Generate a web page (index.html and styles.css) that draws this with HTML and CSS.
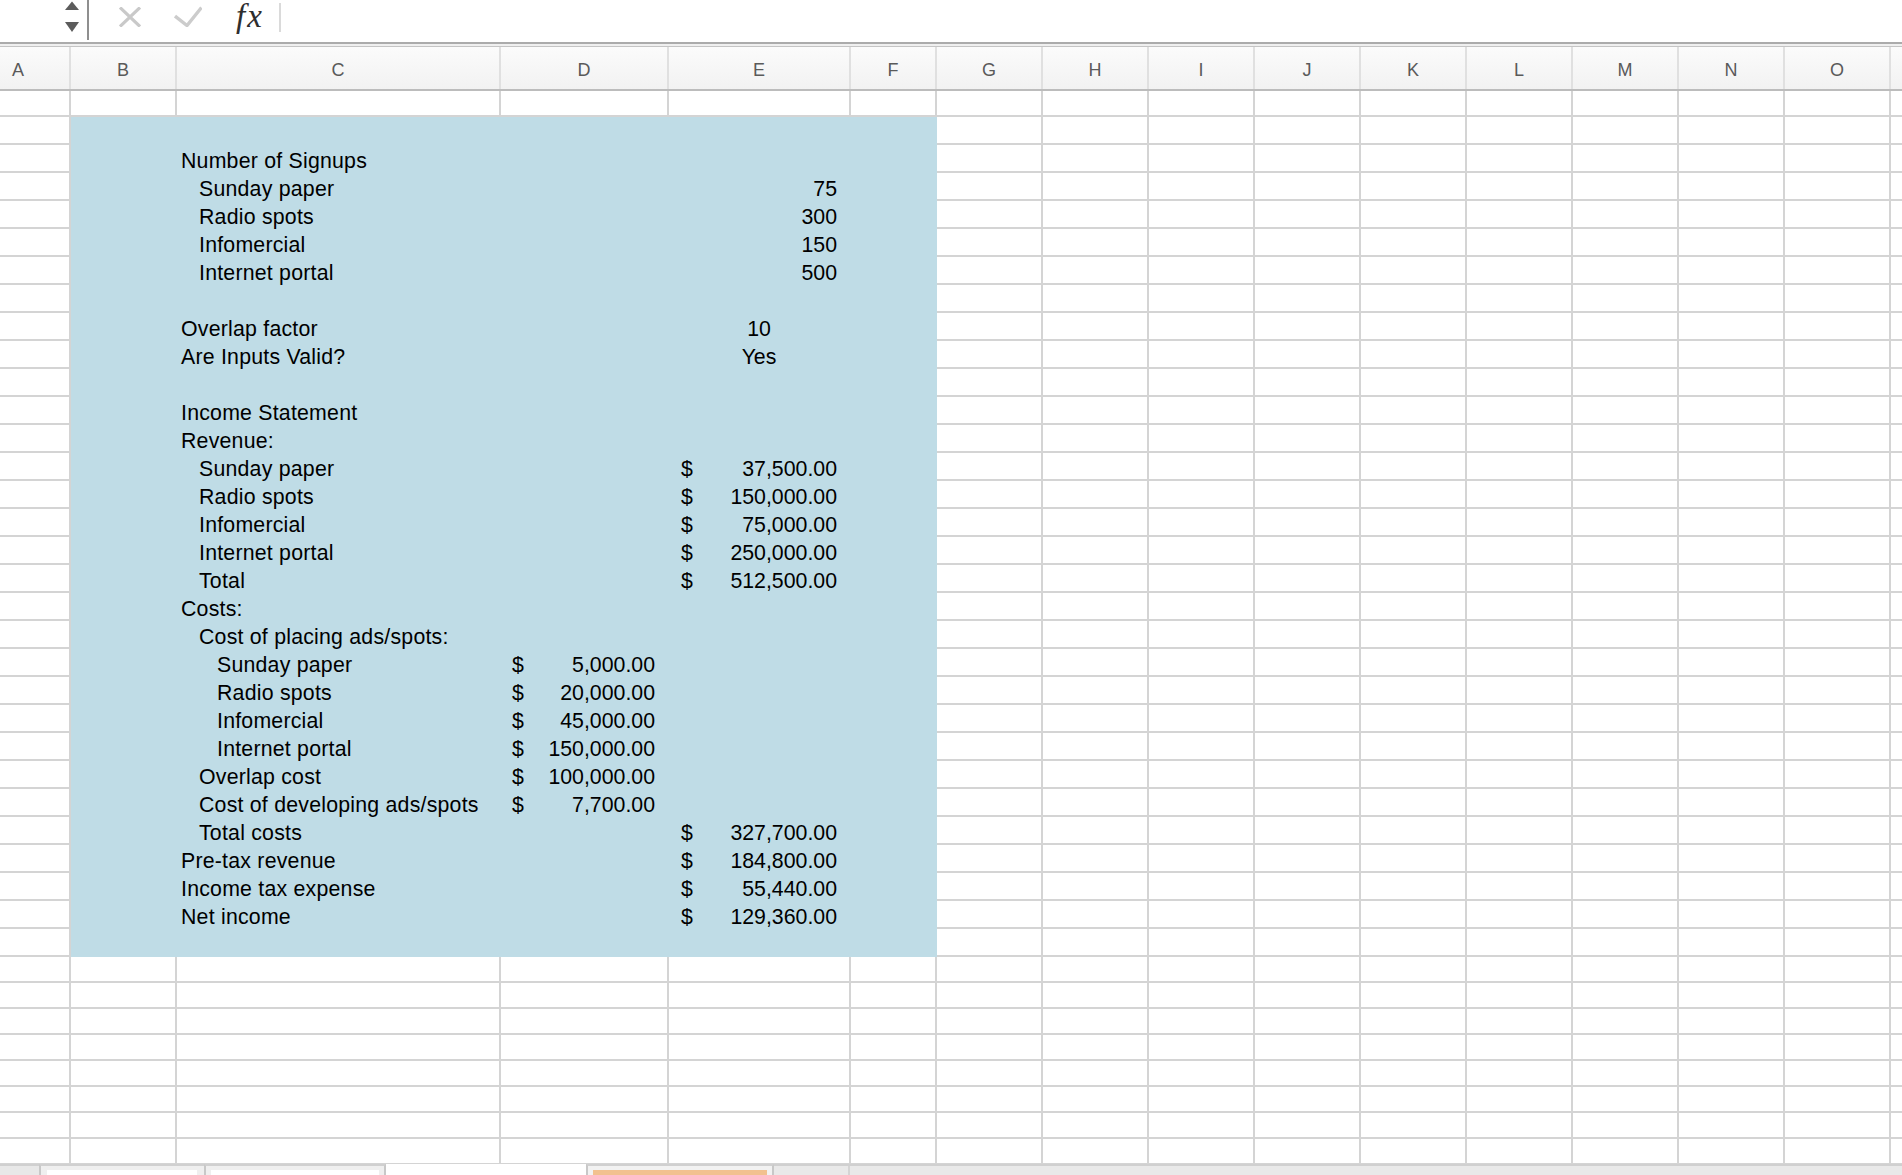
FILE: index.html
```html
<!DOCTYPE html>
<html>
<head>
<meta charset="utf-8">
<title>Sheet</title>
<link rel="stylesheet" href="styles.css">
</head>
<body>
<div class="toolbar">
  <div class="namebox">
    <svg class="spin" width="14" height="32" viewBox="0 0 14 32"><polygon points="7,0.5 0,9 14,9" fill="#5c5c5c"/><polygon points="0,21 14,21 7,31" fill="#5c5c5c"/></svg>
  </div>
  <svg class="cancel" width="22" height="20" viewBox="0 0 22 20"><path d="M1 0.5 L21 19.5 M21 0.5 L1 19.5" stroke="#c9c9c9" stroke-width="3.2" fill="none"/></svg>
  <svg class="confirm" width="28" height="21" viewBox="0 0 28 21"><polyline points="1,10 13,19.5 27.5,1.5" stroke="#cccccc" stroke-width="3.4" fill="none"/></svg>
  <div class="fx">fx</div>
  <div class="sep"></div>
</div>
<div class="rule"></div>
<div class="colhdr">
  <div class="ha">A</div><div>B</div><div>C</div><div>D</div><div>E</div><div>F</div><div>G</div><div>H</div><div>I</div><div>J</div><div>K</div><div>L</div><div>M</div><div>N</div><div>O</div><div></div>
</div>
<div class="sheet">
  <div class="blue">
    <div class="r"></div>
    <div class="r"><span class="lbl">Number of Signups</span></div>
    <div class="r"><span class="lbl l1">Sunday paper</span><span class="e num">75</span></div>
    <div class="r"><span class="lbl l1">Radio spots</span><span class="e num">300</span></div>
    <div class="r"><span class="lbl l1">Infomercial</span><span class="e num">150</span></div>
    <div class="r"><span class="lbl l1">Internet portal</span><span class="e num">500</span></div>
    <div class="r"></div>
    <div class="r"><span class="lbl">Overlap factor</span><span class="e ctr">10</span></div>
    <div class="r"><span class="lbl">Are Inputs Valid?</span><span class="e ctr">Yes</span></div>
    <div class="r"></div>
    <div class="r"><span class="lbl">Income Statement</span></div>
    <div class="r"><span class="lbl">Revenue:</span></div>
    <div class="r"><span class="lbl l1">Sunday paper</span><span class="e acct"><span>$</span><span>37,500.00</span></span></div>
    <div class="r"><span class="lbl l1">Radio spots</span><span class="e acct"><span>$</span><span>150,000.00</span></span></div>
    <div class="r"><span class="lbl l1">Infomercial</span><span class="e acct"><span>$</span><span>75,000.00</span></span></div>
    <div class="r"><span class="lbl l1">Internet portal</span><span class="e acct"><span>$</span><span>250,000.00</span></span></div>
    <div class="r"><span class="lbl l1">Total</span><span class="e acct"><span>$</span><span>512,500.00</span></span></div>
    <div class="r"><span class="lbl">Costs:</span></div>
    <div class="r"><span class="lbl l1">Cost of placing ads/spots:</span></div>
    <div class="r"><span class="lbl l2">Sunday paper</span><span class="d acct"><span>$</span><span>5,000.00</span></span></div>
    <div class="r"><span class="lbl l2">Radio spots</span><span class="d acct"><span>$</span><span>20,000.00</span></span></div>
    <div class="r"><span class="lbl l2">Infomercial</span><span class="d acct"><span>$</span><span>45,000.00</span></span></div>
    <div class="r"><span class="lbl l2">Internet portal</span><span class="d acct"><span>$</span><span>150,000.00</span></span></div>
    <div class="r"><span class="lbl l1">Overlap cost</span><span class="d acct"><span>$</span><span>100,000.00</span></span></div>
    <div class="r"><span class="lbl l1">Cost of developing ads/spots</span><span class="d acct"><span>$</span><span>7,700.00</span></span></div>
    <div class="r"><span class="lbl l1">Total costs</span><span class="e acct"><span>$</span><span>327,700.00</span></span></div>
    <div class="r"><span class="lbl">Pre-tax revenue</span><span class="e acct"><span>$</span><span>184,800.00</span></span></div>
    <div class="r"><span class="lbl">Income tax expense</span><span class="e acct"><span>$</span><span>55,440.00</span></span></div>
    <div class="r"><span class="lbl">Net income</span><span class="e acct"><span>$</span><span>129,360.00</span></span></div>
    <div class="r"></div>
  </div>
  <i></i><i></i><i></i><i></i><i></i><i></i><i></i><i></i><i></i><i></i><i></i><i></i><i></i><i></i><i></i><i></i>
  <i></i><i></i><i></i><i></i><i></i><i></i><i></i><i></i><i></i><i></i><i></i>
  <i></i><i></i><i></i><i></i><i></i><i></i><i></i><i></i><i></i><i></i><i></i>
  <i></i><i></i><i></i><i></i><i></i><i></i><i></i><i></i><i></i><i></i><i></i>
  <i></i><i></i><i></i><i></i><i></i><i></i><i></i><i></i><i></i><i></i><i></i>
  <i></i><i></i><i></i><i></i><i></i><i></i><i></i><i></i><i></i><i></i><i></i>
  <i></i><i></i><i></i><i></i><i></i><i></i><i></i><i></i><i></i><i></i><i></i>
  <i></i><i></i><i></i><i></i><i></i><i></i><i></i><i></i><i></i><i></i><i></i>
  <i></i><i></i><i></i><i></i><i></i><i></i><i></i><i></i><i></i><i></i><i></i>
  <i></i><i></i><i></i><i></i><i></i><i></i><i></i><i></i><i></i><i></i><i></i>
  <i></i><i></i><i></i><i></i><i></i><i></i><i></i><i></i><i></i><i></i><i></i>
  <i></i><i></i><i></i><i></i><i></i><i></i><i></i><i></i><i></i><i></i><i></i>
  <i></i><i></i><i></i><i></i><i></i><i></i><i></i><i></i><i></i><i></i><i></i>
  <i></i><i></i><i></i><i></i><i></i><i></i><i></i><i></i><i></i><i></i><i></i>
  <i></i><i></i><i></i><i></i><i></i><i></i><i></i><i></i><i></i><i></i><i></i>
  <i></i><i></i><i></i><i></i><i></i><i></i><i></i><i></i><i></i><i></i><i></i>
  <i></i><i></i><i></i><i></i><i></i><i></i><i></i><i></i><i></i><i></i><i></i>
  <i></i><i></i><i></i><i></i><i></i><i></i><i></i><i></i><i></i><i></i><i></i>
  <i></i><i></i><i></i><i></i><i></i><i></i><i></i><i></i><i></i><i></i><i></i>
  <i></i><i></i><i></i><i></i><i></i><i></i><i></i><i></i><i></i><i></i><i></i>
  <i></i><i></i><i></i><i></i><i></i><i></i><i></i><i></i><i></i><i></i><i></i>
  <i></i><i></i><i></i><i></i><i></i><i></i><i></i><i></i><i></i><i></i><i></i>
  <i></i><i></i><i></i><i></i><i></i><i></i><i></i><i></i><i></i><i></i><i></i>
  <i></i><i></i><i></i><i></i><i></i><i></i><i></i><i></i><i></i><i></i><i></i>
  <i></i><i></i><i></i><i></i><i></i><i></i><i></i><i></i><i></i><i></i><i></i>
  <i></i><i></i><i></i><i></i><i></i><i></i><i></i><i></i><i></i><i></i><i></i>
  <i></i><i></i><i></i><i></i><i></i><i></i><i></i><i></i><i></i><i></i><i></i>
  <i></i><i></i><i></i><i></i><i></i><i></i><i></i><i></i><i></i><i></i><i></i>
  <i></i><i></i><i></i><i></i><i></i><i></i><i></i><i></i><i></i><i></i><i></i>
  <i></i><i></i><i></i><i></i><i></i><i></i><i></i><i></i><i></i><i></i><i></i>
  <i></i><i></i><i></i><i></i><i></i><i></i><i></i><i></i><i></i><i></i><i></i>
  <i></i><i></i><i></i><i></i><i></i><i></i><i></i><i></i><i></i><i></i><i></i><i></i><i></i><i></i><i></i><i></i>
  <i></i><i></i><i></i><i></i><i></i><i></i><i></i><i></i><i></i><i></i><i></i><i></i><i></i><i></i><i></i><i></i>
  <i></i><i></i><i></i><i></i><i></i><i></i><i></i><i></i><i></i><i></i><i></i><i></i><i></i><i></i><i></i><i></i>
  <i></i><i></i><i></i><i></i><i></i><i></i><i></i><i></i><i></i><i></i><i></i><i></i><i></i><i></i><i></i><i></i>
  <i></i><i></i><i></i><i></i><i></i><i></i><i></i><i></i><i></i><i></i><i></i><i></i><i></i><i></i><i></i><i></i>
  <i></i><i></i><i></i><i></i><i></i><i></i><i></i><i></i><i></i><i></i><i></i><i></i><i></i><i></i><i></i><i></i>
  <i></i><i></i><i></i><i></i><i></i><i></i><i></i><i></i><i></i><i></i><i></i><i></i><i></i><i></i><i></i><i></i>
  <i></i><i></i><i></i><i></i><i></i><i></i><i></i><i></i><i></i><i></i><i></i><i></i><i></i><i></i><i></i><i></i>
</div>
<div class="tabs">
  <div class="tab-lead"></div>
  <div class="tab t1"><div class="tab-in"></div></div>
  <div class="tab t2"><div class="tab-in"></div></div>
  <div class="tab-gap"></div>
  <div class="tab t3"><div class="tab-in active"></div></div>
  <div class="tab-rest"><div class="tab-mark"></div></div>
</div>
</body>
</html>
```
FILE: styles.css
```css
html, body {
  margin: 0;
  padding: 0;
}
body {
  width: 1902px;
  height: 1175px;
  overflow: hidden;
  display: flex;
  flex-direction: column;
  background: #ffffff;
  font-family: "Liberation Sans", Arial, sans-serif;
  color: #000000;
}

/* formula toolbar */
.toolbar {
  flex: none;
  height: 42px;
  display: flex;
  align-items: flex-start;
  border-bottom: 2px solid #ababab;
  background: #ffffff;
}
.namebox {
  box-sizing: border-box;
  width: 89px;
  height: 40px;
  padding: 1px 0 0 65px;
  border-right: 2px solid #8f8f8f;
}
.spin { display: block; }
.cancel { display: block; margin: 7px 0 0 30px; }
.confirm { display: block; margin: 6px 0 0 33px; }
.fx {
  box-sizing: border-box;
  width: 77px;
  padding-left: 34px;
  font-family: "Liberation Serif", "Times New Roman", serif;
  font-style: italic;
  font-size: 33px;
  line-height: 32px;
  letter-spacing: 2px;
  color: #2e2e2e;
  white-space: nowrap;
}
.sep {
  width: 2px;
  height: 29px;
  margin: 3px 0 0 0;
  background: #dadada;
}
.rule {
  flex: none;
  height: 2px;
  background: #efefef;
  border-bottom: 1px solid #c4c4c4;
}

/* column header */
.colhdr {
  flex: none;
  box-sizing: border-box;
  height: 44px;
  display: grid;
  grid-template-columns: 71px 106px 324px 168px 182px 86px repeat(9, 106px) 106px;
  border-bottom: 2px solid #bcbcbc;
  background: linear-gradient(#fbfbfb, #f2f2f2);
}
.colhdr > div {
  border-right: 2px solid #e0e0e0;
  display: flex;
  align-items: center;
  justify-content: center;
  font-size: 18px;
  color: #5a5a5a;
  padding-top: 4px;
}
.colhdr > .ha {
  justify-content: flex-start;
  padding-left: 12px;
}

/* grid */
.sheet {
  flex: 1;
  min-height: 0;
  overflow: hidden;
  display: grid;
  grid-template-columns: 71px 106px 324px 168px 182px 86px repeat(9, 106px) 106px;
  grid-template-rows: 26px repeat(30, 28px);
  grid-auto-rows: 26px;
}
.sheet > i {
  display: block;
  border-right: 2px solid #d4d4d4;
  border-bottom: 2px solid #d4d4d4;
}

.blue {
  grid-column: 2 / 7;
  grid-row: 2 / 32;
  margin-left: -2px;
  background: #bfdce6;
  display: flex;
  flex-direction: column;
}
.r {
  height: 28px;
  flex: none;
  display: grid;
  grid-template-columns: 108px 324px 168px 182px 86px;
  align-items: end;
  font-size: 21.3px;
  line-height: 24px;
}
.lbl {
  grid-column: 2;
  padding-left: 4px;
  white-space: nowrap;
  letter-spacing: 0.22px;
}
.l1 { padding-left: 22px; }
.l2 { padding-left: 40px; }
.d {
  grid-column: 3;
  padding: 0 14px 0 11px;
}
.e {
  grid-column: 4;
  padding: 0 14px 0 12px;
}
.acct {
  display: flex;
  justify-content: space-between;
}
.num { text-align: right; }
.ctr { text-align: center; padding: 0 2px 0 0; }

/* sheet tabs */
.tabs {
  flex: none;
  height: 11px;
  display: flex;
}
.tab-lead {
  width: 39px;
  border-top: 2px solid #d0d0d0;
  background: #e8e8e8;
}
.tab {
  box-sizing: border-box;
  display: flex;
  border-top: 2px solid #d0d0d0;
  border-left: 2px solid #c8c8c8;
  background: #efefef;
  padding-top: 4px;
}
.t1 { width: 165px; padding-left: 6px; padding-right: 7px; }
.t2 { width: 182px; padding-left: 5px; padding-right: 5px; border-right: 2px solid #c8c8c8; }
.t3 { width: 188px; padding-left: 5px; padding-right: 5px; border-right: 2px solid #c8c8c8; background: #f2f2f2; }
.tab-in {
  flex: 1;
  background: #ffffff;
}
.tab-in.active { background: #f2c18f; }
.tab-gap {
  width: 200px;
  background: #ffffff;
}
.tab-rest {
  flex: 1;
  border-top: 2px solid #d0d0d0;
  background: #e9e9e9;
  display: flex;
}
.tab-mark {
  width: 2px;
  margin-left: 74px;
  background: #d4d4d4;
}
```
